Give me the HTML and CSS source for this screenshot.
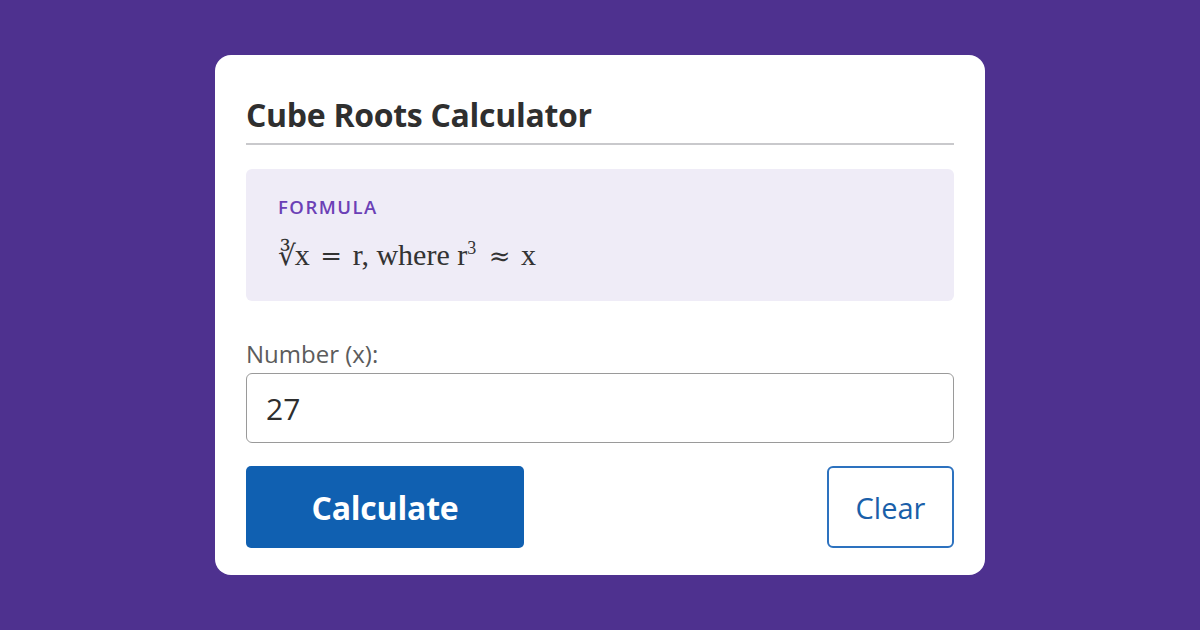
FILE: index.html
```html
<!DOCTYPE html>
<html lang="en">
<head>
<meta charset="utf-8">
<link rel="stylesheet" href="styles.css">
</head>
<body>
<div class="page">
  <div class="card">
    <h1 class="title">Cube Roots Calculator</h1>
    <div class="formula">
      <div class="formula-label">FORMULA</div>
      <div class="formula-text"><span class="root">∛</span>x <span class="op">=</span> r, where r<sup class="pow">3</sup> <span class="op">≈</span> x</div>
    </div>
    <label class="field-label">Number (x):</label>
    <div class="input">27</div>
    <div class="actions">
      <button class="btn-primary">Calculate</button>
      <button class="btn-secondary">Clear</button>
    </div>
  </div>
</div>
</body>
</html>
```

FILE: styles.css
```css
html, body {
  margin: 0;
  padding: 0;
}
body {
  width: 1200px;
  height: 630px;
  background: #4e318f;
  font-family: "Open Sans", "Noto Sans", sans-serif;
  overflow: hidden;
}
.page {
  display: flex;
  justify-content: center;
  padding-top: 55px;
}
.card {
  box-sizing: border-box;
  width: 770px;
  height: 520px;
  background: #ffffff;
  border-radius: 16px;
  padding: 40px 31px 27px;
  display: flex;
  flex-direction: column;
}
.title {
  margin: 0;
  font-size: 32px;
  font-weight: 700;
  color: #2f2f2f;
  line-height: 40px;
  letter-spacing: -0.3px;
  padding-bottom: 8px;
  border-bottom: 2px solid #c9c9cc;
}
.formula {
  margin-top: 24px;
  background: #efecf7;
  border-radius: 6px;
  height: 132px;
  flex-shrink: 0;
  box-sizing: border-box;
  padding: 25px 32px 0;
}
.formula-label {
  font-size: 18.5px;
  line-height: 26px;
  color: #6b40b6;
  letter-spacing: 1.5px;
  font-weight: 600;
}
.formula-text {
  margin-top: 18px;
  font-family: "Liberation Serif", "DejaVu Serif", serif;
  font-size: 30px;
  line-height: 34px;
  color: #333333;
}
.root {
  font-family: "DejaVu Serif", serif;
  font-size: 28px;
  margin-right: -1px;
}
.op {
  font-family: "DejaVu Serif", serif;
  font-size: 26px;
  margin: 0 3px;
}
.pow {
  font-size: 18px;
  vertical-align: 11px;
  line-height: 0;
  margin-right: 2px;
}
.field-label {
  margin-top: 38px;
  font-size: 24px;
  line-height: 30px;
  color: #5c5c5c;
}
.input {
  margin-top: 4px;
  box-sizing: border-box;
  height: 70px;
  flex-shrink: 0;
  border: 1px solid #9a9a9a;
  border-radius: 6px;
  padding: 0 19px;
  display: flex;
  align-items: center;
  font-size: 30px;
  color: #2e2e2e;
}
.actions {
  margin-top: 23px;
  display: flex;
  justify-content: space-between;
}
.btn-primary {
  width: 278px;
  height: 82px;
  border: none;
  border-radius: 5px;
  background: #1060b1;
  color: #ffffff;
  font-family: "Open Sans", "Noto Sans", sans-serif;
  font-size: 32px;
  font-weight: 700;
  letter-spacing: -0.2px;
}
.btn-secondary {
  width: 127px;
  height: 82px;
  box-sizing: border-box;
  border: 2px solid #2d72bf;
  border-radius: 6px;
  background: #ffffff;
  color: #1a5fa9;
  font-family: "Open Sans", "Noto Sans", sans-serif;
  font-size: 29px;
}
```
